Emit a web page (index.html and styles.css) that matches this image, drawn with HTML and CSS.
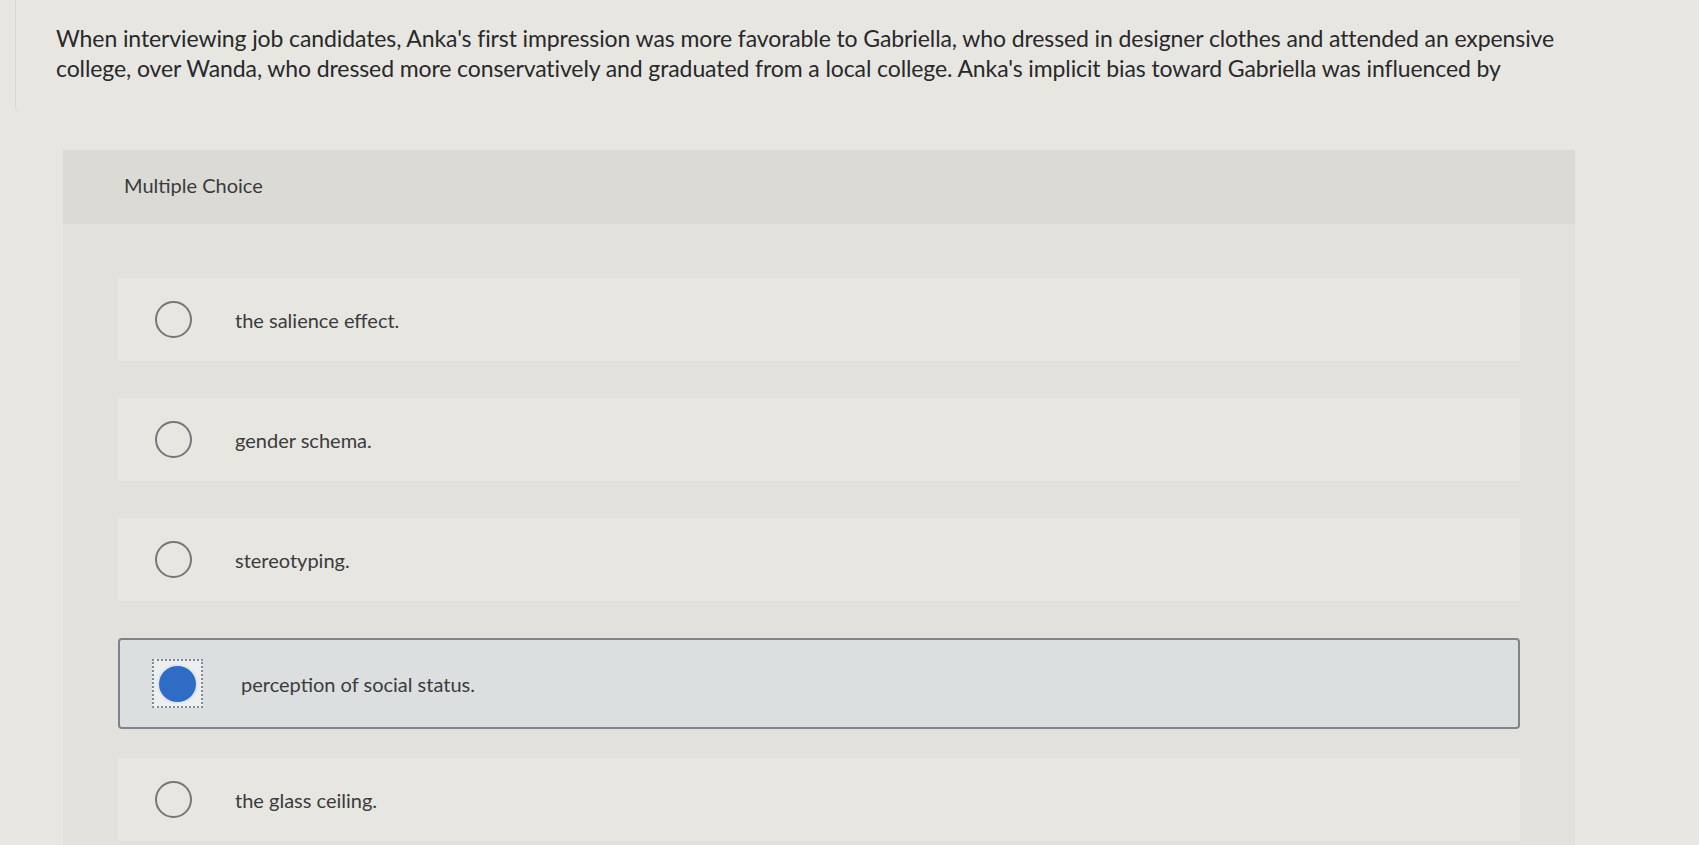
FILE: index.html
```html
<!DOCTYPE html>
<html lang="en">
<head>
<meta charset="utf-8">
<title>Multiple Choice</title>
<link rel="stylesheet" href="styles.css">
</head>
<body>
<div class="page">
  <div class="question">
    <p class="prompt">When interviewing job candidates, Anka's first impression was more favorable to Gabriella, who dressed in designer clothes and attended an expensive college, over Wanda, who dressed more conservatively and graduated from a local college. Anka's implicit bias toward Gabriella was influenced by</p>
  </div>

  <div class="panel">
    <div class="panel-header">Multiple Choice</div>
    <div class="options">
      <div class="option">
        <span class="radio"></span>
        <span class="label">the salience effect.</span>
      </div>
      <div class="option">
        <span class="radio"></span>
        <span class="label">gender schema.</span>
      </div>
      <div class="option">
        <span class="radio"></span>
        <span class="label">stereotyping.</span>
      </div>
      <div class="option selected">
        <span class="focus"><span class="radio checked"></span></span>
        <span class="label">perception of social status.</span>
      </div>
      <div class="option">
        <span class="radio"></span>
        <span class="label">the glass ceiling.</span>
      </div>
    </div>
  </div>
</div>
</body>
</html>
```

FILE: styles.css
```css
html, body {
  margin: 0;
  padding: 0;
}

body {
  background: #e7e6e1;
  font-family: Lato, "Open Sans", "Liberation Sans", sans-serif;
  color: #333336;
  width: 1699px;
  height: 845px;
  overflow: hidden;
}

.page {
  display: flex;
  flex-direction: column;
  height: 845px;
  overflow: hidden;
}

.question {
  margin-left: 15px;
  padding: 23px 0 30px 40px;
  border-left: 1px solid #d9d8d3;
  border-bottom-left-radius: 6px;
  flex: none;
}

.prompt {
  margin: 0;
  width: 1530px;
  font-size: 23px;
  line-height: 30px;
  color: #29292c;
  letter-spacing: -0.1px;
}

.panel {
  margin: 37px 0 0 63px;
  width: 1512px;
  background: #e2e1dc;
  flex: 1;
  min-height: 0;
  overflow: hidden;
}

.panel-header {
  height: 74px;
  display: flex;
  align-items: center;
  padding-left: 61px;
  padding-bottom: 4px;
  box-sizing: border-box;
  background: #dbdad5;
  font-size: 20px;
  color: #3a3a3d;
}

.options {
  display: flex;
  flex-direction: column;
  gap: 37px;
  padding: 54px 55px 0 55px;
}

.option {
  height: 83px;
  flex: none;
  display: flex;
  align-items: center;
  background: #e7e6e1;
  box-sizing: border-box;
  padding-left: 37px;
}

.radio {
  width: 37px;
  height: 37px;
  box-sizing: border-box;
  border: 2px solid #77777b;
  border-radius: 50%;
  flex: none;
}

.label {
  margin-left: 43px;
  font-size: 20px;
  color: #3b3b3e;
}

.option.selected {
  height: 91px;
  margin-bottom: -8px;
  background: #dcdfdf;
  border: 2px solid #80838a;
  border-radius: 4px;
  padding-left: 32px;
}

.focus {
  width: 51px;
  height: 49px;
  box-sizing: border-box;
  border: 2px dotted #7f8a9c;
  display: flex;
  align-items: center;
  justify-content: center;
  background: #eceeef;
  flex: none;
}

.radio.checked {
  width: 41px;
  height: 40px;
  border: 2px solid #dfe6ee;
  background: #2f6cc6;
}

.option.selected .label {
  margin-left: 38px;
}
```
